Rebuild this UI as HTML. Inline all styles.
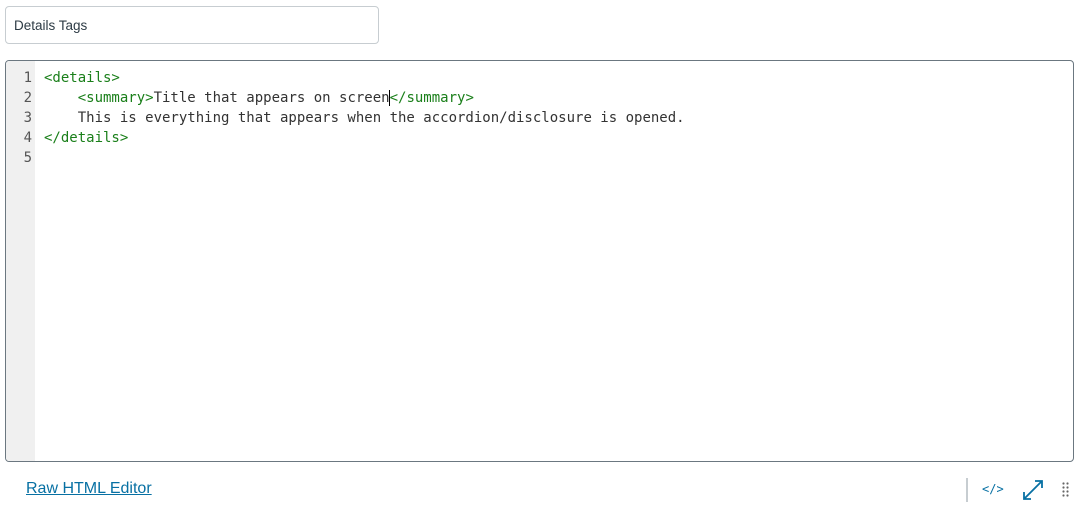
<!DOCTYPE html>
<html><head><style>
body{margin:0;width:1085px;height:516px;background:#fff;font-family:"Liberation Sans",sans-serif;position:relative;overflow:hidden}
.inp{position:absolute;left:5px;top:6px;border:1px solid #c7cdd1;border-radius:4px;box-sizing:border-box;font-size:13.5px;color:#2d3b45;padding-left:8px;line-height:37px;height:38px;width:374px}
.ed{position:absolute;left:5px;top:60px;width:1069px;height:402px;border:1px solid #6b7780;border-radius:4px;box-sizing:border-box;overflow:hidden}
.gut{position:absolute;left:0;top:0;width:29px;height:100%;background:#f0f0f0}
.ln{position:absolute;font-family:"DejaVu Sans Mono",monospace;font-size:14px;line-height:20px;top:7px;white-space:pre;color:#333}
.nums{left:0;width:26px;text-align:right;color:#555}
.code{left:38px}
.t{color:#1a7f1a}
.cur{border-left:1px solid #000;margin-left:-1px}
a{position:absolute;left:26px;top:480px;font-size:16px;color:#0770a3;text-decoration:underline}
</style></head><body>
<div class="inp">Details Tags</div>
<div class="ed"><div class="gut"></div>
<div class="ln nums">1
2
3
4
5</div>
<div class="ln code"><span class="t">&lt;details&gt;</span>
    <span class="t">&lt;summary&gt;</span>Title that appears on screen<span class="cur"></span><span class="t">&lt;/summary&gt;</span>
    This is everything that appears when the accordion/disclosure is opened.
<span class="t">&lt;/details&gt;</span>
</div></div>
<a>Raw HTML Editor</a>
<div style="position:absolute;left:966px;top:478px;width:2px;height:24px;background:#c7cdd1"></div>
<div style="position:absolute;left:982px;top:482px;font-family:'DejaVu Sans Mono',monospace;font-size:12px;color:#0770a3">&lt;/&gt;</div>
<svg style="position:absolute;left:1022px;top:479px" width="22" height="22" viewBox="0 0 22 22" fill="none" stroke="#0770a3" stroke-width="1.8"><path d="M2 20L20 2M13 2h7v7M2 13v7h7"/></svg>
<svg style="position:absolute;left:1062px;top:482px" width="10" height="20" fill="#666"><circle cx="1.5" cy="1.5" r="1.1"/><circle cx="5.5" cy="1.5" r="1.1"/><circle cx="1.5" cy="5.5" r="1.1"/><circle cx="5.5" cy="5.5" r="1.1"/><circle cx="1.5" cy="9.5" r="1.1"/><circle cx="5.5" cy="9.5" r="1.1"/><circle cx="1.5" cy="13.5" r="1.1"/><circle cx="5.5" cy="13.5" r="1.1"/></svg>
</body></html>
